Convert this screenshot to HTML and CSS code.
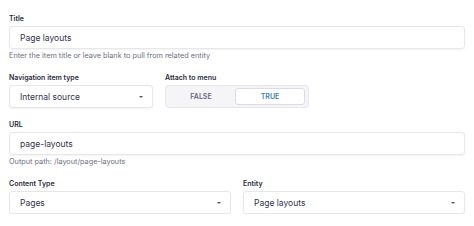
FILE: index.html
```html
<!DOCTYPE html>
<html>
<head>
<title>Navigation item</title>
<link rel="stylesheet" href="styles.css">
</head>
<body>
<form class="nav-form">
  <div class="field span-6">
    <label for="title">Title</label>
    <div class="input">Page layouts</div>
    <p class="hint">Enter the item title or leave blank to pull from related entity</p>
  </div>

  <div class="field span-2">
    <label for="type">Navigation item type</label>
    <div class="input select">Internal source <span class="caret"></span></div>
  </div>

  <div class="field span-2">
    <label>Attach to menu</label>
    <div class="toggle">
      <span class="toggle-opt">FALSE</span>
      <span class="toggle-opt active">TRUE</span>
    </div>
  </div>

  <div class="field span-6">
    <label for="url">URL</label>
    <div class="input">page-layouts</div>
    <p class="hint">Output path: /layout/page-layouts</p>
  </div>

  <div class="field span-3">
    <label for="content_type">Content Type</label>
    <div class="input select">Pages <span class="caret"></span></div>
  </div>

  <div class="field span-3">
    <label for="entity">Entity</label>
    <div class="input select">Page layouts <span class="caret"></span></div>
  </div>
</form>
</body>
</html>
```

FILE: styles.css
```css
body {
  font-family: Inter, "Liberation Sans", sans-serif;
  background-color: #fff;
  color: #32324d;
  margin: 0;
  padding: 13px 9px 0 9px;
}

.nav-form {
  display: grid;
  grid-template-columns: repeat(6, 1fr);
  column-gap: 12px;
  row-gap: 11px;
}

.span-6 { grid-column: span 6; }
.span-3 { grid-column: span 3; }
.span-2 { grid-column: span 2; }

label {
  display: block;
  font-size: 7px;
  font-weight: 600;
  line-height: 11px;
  margin-bottom: 2px;
  color: #2c2c3a;
}

.input {
  height: 23px;
  box-sizing: border-box;
  border: 1px solid #e6e6ec;
  border-radius: 3px;
  padding: 0 9px 0 10px;
  display: flex;
  align-items: center;
  font-size: 8.5px;
  color: #32324d;
  box-shadow: 0 1px 2px rgba(33, 33, 52, 0.06);
}

.select {
  justify-content: space-between;
}

.caret {
  width: 0;
  height: 0;
  border-left: 2px solid transparent;
  border-right: 2px solid transparent;
  border-top: 2px solid #55556a;
}

.hint {
  margin: 2px 0 0 0;
  font-size: 7.3px;
  line-height: 10px;
  color: #6e6e80;
}

.toggle {
  height: 23px;
  box-sizing: border-box;
  border: 1px solid #e6e6ec;
  border-radius: 4px;
  background-color: #f5f5f8;
  padding: 2px 3px 2px 1px;
  display: flex;
}

.toggle-opt {
  flex: 1;
  display: flex;
  align-items: center;
  justify-content: center;
  font-size: 7px;
  font-weight: 600;
  color: #666687;
  border-radius: 3px;
}

.toggle-opt.active {
  background-color: #fff;
  border: 1px solid #dcdce4;
  color: #3b82ad;
}
```
